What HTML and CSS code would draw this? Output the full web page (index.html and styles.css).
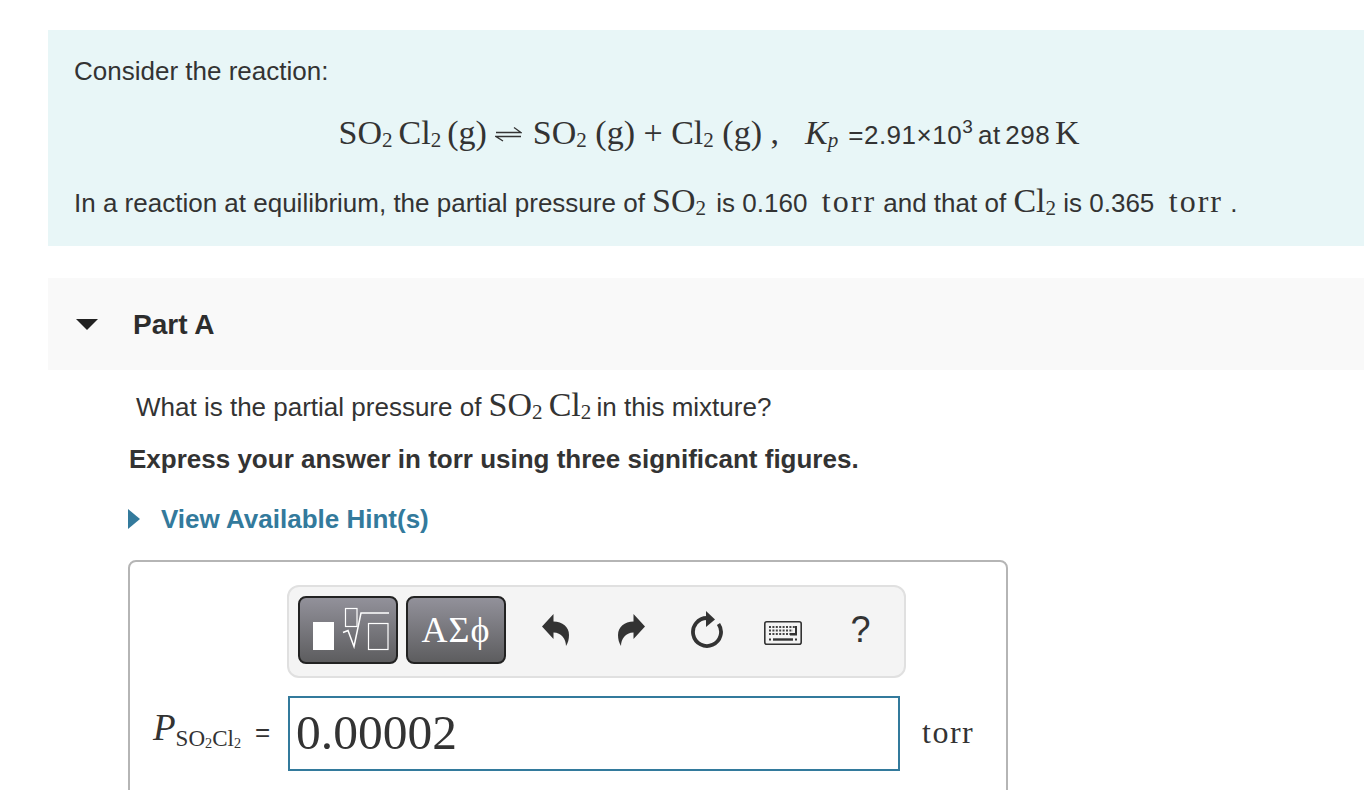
FILE: index.html
```html
<!DOCTYPE html>
<html lang="en">
<head>
    <meta charset="UTF-8">
    <title>Part A</title>
    <link rel="stylesheet" href="styles.css">
</head>
<body>
<section class="intro">
    <p class="intro-line">Consider the reaction:</p>
    <div class="equation">
        <span class="math"><span class="tight">SO<sub>2</sub> Cl<sub>2</sub> (g)</span><span class="arrows"><svg width="27" height="16" viewBox="0 0 27 16"><path d="M1 6.500H26L19 1.500M26 10.500H1L8 15" fill="none" stroke="#333" stroke-width="1.300"/></svg></span>SO<sub>2</sub> (g) + Cl<sub>2</sub> (g) ,</span>
        <span class="kp"><i class="math symbol-k">K<sub>p</sub></i>=2.91×10<sup>3</sup> at 298 <span class="math">K</span></span>
    </div>
    <p class="intro-line">In a reaction at equilibrium, the partial pressure of <span class="math so2">SO<sub>2</sub></span> is 0.160 &nbsp;<span class="math word">torr</span> and that of <span class="math">Cl<sub>2</sub></span> is 0.365 &nbsp;<span class="math word">torr</span> .</p>
</section>

<section class="part">
    <div class="part-header">
        <span class="caret-down"></span>
        <h2>Part A</h2>
    </div>
    <div class="part-body">
        <p class="question">What is the partial pressure of <span class="math tight">SO<sub>2</sub> Cl<sub>2</sub></span> in this mixture?</p>
        <p class="instruction">Express your answer in torr using three significant figures.</p>
        <a class="hint" href="#"><span class="caret-right"></span>View Available Hint(s)</a>

        <div class="answer-box">
            <div class="toolbar">
                <button class="tool-btn templates">
                    <svg width="96" height="64" viewBox="0 0 96 64">
                        <rect x="13" y="24" width="21" height="28" fill="#fff"/>
                        <rect x="45.500" y="10.500" width="11.500" height="18" fill="none" stroke="#fff" stroke-width="1.200"/>
                        <path d="M43 34.500l5-2 6 16 7-33.500H89" fill="none" stroke="#fff" stroke-width="1.500"/>
                        <rect x="68.500" y="25.500" width="19.500" height="26" fill="none" stroke="#fff" stroke-width="1.200"/>
                    </svg>
                </button>
                <button class="tool-btn symbols">ΑΣϕ</button>
                <span class="tool-icons">
                    <svg width="27" height="32" viewBox="0 0 27 32"><path d="M0 12.500L11.500 0v7.500c9 0 15.500 5.500 15.500 13.500 0 4-1 8-3 11 0-7-4.500-13.500-12.500-13.500V25z" fill="#333"/></svg>
                    <svg width="27" height="32" viewBox="0 0 27 32"><path d="M27 12.500L15.500 0v7.500C6.500 7.500 0 13 0 21c0 4 1 8 3 11 0-7 4.500-13.500 12.500-13.500V25z" fill="#333"/></svg>
                    <svg width="36" height="38" viewBox="0 0 36 38"><path d="M18 7A14 14 0 1 0 29.500 13" fill="none" stroke="#333" stroke-width="3.800"/><path d="M17 0l9 8.500-9 7.500z" fill="#333"/></svg>
                    <svg class="keyboard" width="38" height="24" viewBox="0 0 38 24"><rect x="0.800" y="0.800" width="36.400" height="22.400" rx="2" fill="none" stroke="#333" stroke-width="1.600"/><path d="M5 6h26M5 9.500h24M5 13h24" stroke="#444" stroke-width="1.800" stroke-dasharray="2 1.400"/><path d="M31 5h2v9.500h-7v-2.500h5z" fill="#333"/><path d="M9 18.500h20" stroke="#333" stroke-width="2.400"/><path d="M5 18.500h2M31 18.500h2" stroke="#333" stroke-width="2"/></svg>
                    <span class="help">?</span>
                </span>
            </div>
            <div class="answer-row">
                <span class="answer-label"><i class="math">P</i><span class="math label-sub">SO<sub>2</sub>Cl<sub>2</sub></span></span>
                <span class="equals">=</span>
                <div class="answer-input">0.00002</div>
                <span class="math unit">torr</span>
            </div>
        </div>
    </div>
</section>
</body>
</html>
```

FILE: styles.css
```css
html, body {
    height: 100%;
    overflow: hidden;
}

body {
    margin: 0;
    padding: 30px 0 0 48px;
    box-sizing: border-box;
    background-color: #fff;
    color: #333;
    font-family: "Liberation Sans", Arial, sans-serif;
    font-size: 26px;
}

p {
    margin: 0;
}

.math {
    font-family: "Liberation Serif", "Times New Roman", serif;
    font-size: 34px;
    line-height: 1;
}

.math sub {
    font-size: 0.62em;
    line-height: 0;
    vertical-align: -0.16em;
}

.tight {
    word-spacing: -2.500px;
}

.so2 {
    margin-right: 3px;
}

.word {
    font-size: 32px;
    letter-spacing: 2px;
}

/* intro panel */
.intro {
    height: 216px;
    box-sizing: border-box;
    padding: 24px 26px 0;
    background-color: #e8f6f7;
}

.intro-line {
    line-height: 36px;
}

.intro-line:first-child {
    margin-top: -1px;
}

.equation {
    display: flex;
    justify-content: center;
    align-items: baseline;
    gap: 26px;
    margin: 27px 0 31px;
    padding-left: 6px;
    line-height: 36px;
}

.arrows {
    margin: 0 11px 0 8px;
}

.arrows svg {
    vertical-align: 2px;
}

.kp {
    letter-spacing: 0.500px;
    word-spacing: -3px;
}

.kp .math {
    letter-spacing: 0;
}

.symbol-k {
    margin-right: 10px;
}

.kp sup {
    font-size: 19px;
    line-height: 0;
    vertical-align: 11px;
}

/* part */
.part {
    margin-top: 32px;
}

.part-header {
    display: flex;
    align-items: center;
    height: 92px;
    padding-left: 28px;
    background-color: #f9f9f9;
}

.part-header h2 {
    margin: 2px 0 0 35px;
    font-size: 28px;
    color: #2d2d2d;
}

.caret-down {
    width: 0;
    height: 0;
    border-left: 11px solid transparent;
    border-right: 11px solid transparent;
    border-top: 11px solid #222;
}

.part-body {
    padding: 18px 0 0 80px;
}

.question {
    line-height: 38px;
    margin-left: 8px;
}

.question .tight {
    margin-right: -2px;
}

.instruction {
    margin: 14px 0 0 1px;
    line-height: 38px;
    font-weight: bold;
}

.hint {
    display: flex;
    align-items: center;
    margin-top: 22px;
    line-height: 38px;
    font-weight: bold;
    color: #337a9c;
    text-decoration: none;
}

.caret-right {
    width: 0;
    height: 0;
    margin-right: 21px;
    border-top: 10px solid transparent;
    border-bottom: 10px solid transparent;
    border-left: 12px solid #337a9c;
}

/* answer box */
.answer-box {
    width: 880px;
    height: 300px;
    box-sizing: border-box;
    margin-top: 22px;
    padding: 23px 0 0 8px;
    border: 2px solid #b5b5b5;
    border-radius: 8px;
}

.toolbar {
    display: flex;
    align-items: center;
    width: 619px;
    height: 93px;
    box-sizing: border-box;
    margin-left: 149px;
    padding: 0 0 3px 9px;
    border: 2px solid #e0e0e0;
    border-radius: 12px;
    background-color: #f4f4f4;
}

.tool-btn {
    display: block;
    width: 100px;
    height: 68px;
    padding: 0;
    border: 2px solid #222;
    border-radius: 8px;
    background: linear-gradient(#92919a, #5d5d5f);
    color: #fff;
}

.templates svg {
    display: block;
}

.symbols {
    margin-left: 8px;
    font-family: "Liberation Serif", serif;
    font-size: 36px;
    letter-spacing: 1px;
}

.tool-icons {
    display: grid;
    grid-template-columns: repeat(5, 76px);
    justify-items: center;
    align-items: center;
    margin-left: 11px;
}

.keyboard {
    margin-top: 6px;
}

.help {
    margin-left: 3px;
    font-size: 36px;
}

.answer-row {
    display: flex;
    align-items: center;
    margin-top: 18px;
}

.answer-label {
    width: 102px;
    margin: 0 0 8px 15px;
    white-space: nowrap;
}

.answer-label i {
    font-size: 37px;
}

.label-sub {
    font-size: 23px;
    vertical-align: -6px;
}

.equals {
    width: 33px;
    margin-bottom: 3px;
}

.answer-input {
    width: 612px;
    height: 75px;
    box-sizing: border-box;
    padding-left: 6px;
    border: 2px solid #337a9c;
    font-family: "Liberation Serif", serif;
    font-size: 49.500px;
    line-height: 69px;
}

.unit {
    margin: 0 0 4px 22px;
    font-size: 32px;
    letter-spacing: 1.500px;
}
```
